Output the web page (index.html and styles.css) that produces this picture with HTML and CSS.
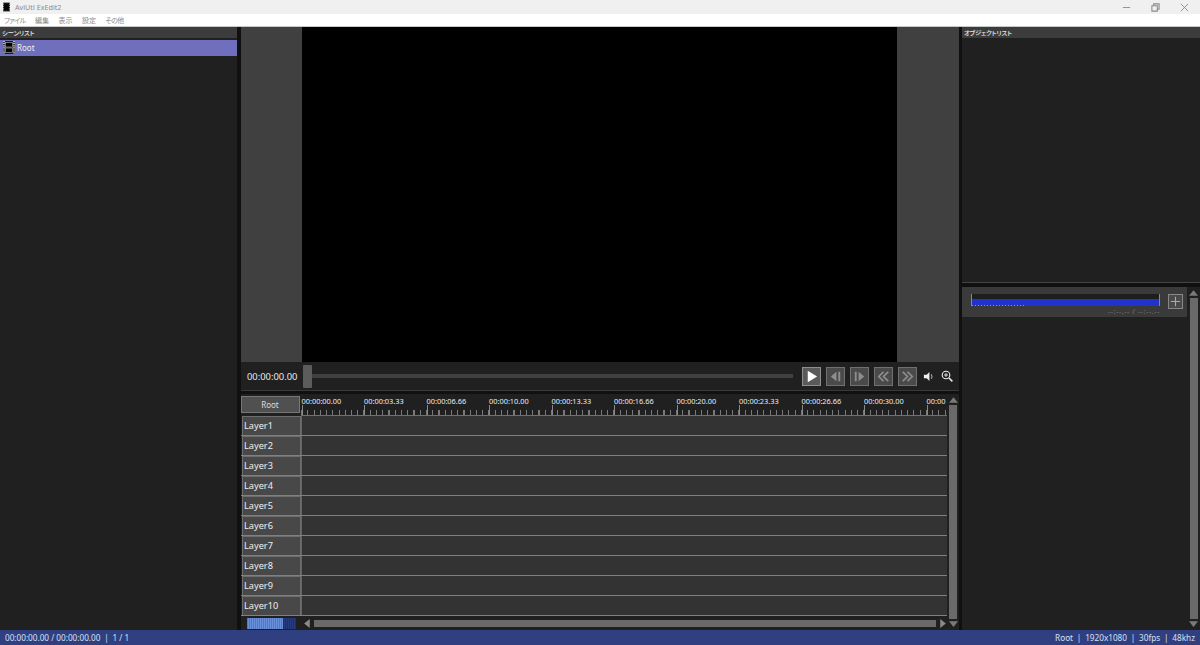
FILE: index.html
```html
<!DOCTYPE html>
<html lang="ja">
<head>
<meta charset="utf-8">
<title>AviUtl ExEdit2</title>
<link rel="stylesheet" href="styles.css">
</head>
<body>
<div class="app">
  <header class="titlebar">
    <div class="title-left">
      <svg class="app-icon" viewBox="0 0 8 10"><rect width="8" height="10" fill="#111"/><rect x="1.6" y="2" width="4.8" height="6" fill="#000"/><path d="M.6 0v10M7.4 0v10" stroke="#ccc" stroke-width="1" stroke-dasharray="1 1"/></svg>
      <span>AviUtl ExEdit2</span>
    </div>
    <div class="win-buttons">
      <svg viewBox="0 0 10 10"><path d="M1 5h8" stroke="#8a8a8a" stroke-width="1"/></svg>
      <svg viewBox="0 0 10 10"><path d="M3 3V1h6v6H7M1 3h6v6H1z" fill="none" stroke="#8a8a8a" stroke-width="1.2"/></svg>
      <svg viewBox="0 0 10 10"><path d="M1 1l8 8M9 1l-8 8" stroke="#8a8a8a" stroke-width="1"/></svg>
    </div>
  </header>
  <nav class="menubar">
    <span class="menu-file">ファイル</span><span>編集</span><span>表示</span><span>設定</span><span class="menu-other">その他</span>
  </nav>
  <main class="workspace">
    <aside class="scene-panel">
      <div class="panel-head">シーンリスト</div>
      <div class="scene-row">
        <svg class="film" viewBox="0 0 12 13"><rect width="12" height="13" fill="#1a1a1a"/><rect x="2.5" y="1.5" width="7" height="4.5" fill="#000" stroke="#bbb" stroke-width=".6"/><rect x="2.5" y="7" width="7" height="4.5" fill="#000" stroke="#bbb" stroke-width=".6"/><path d="M1 0v13M11 0v13" stroke="#ddd" stroke-width="1.6" stroke-dasharray="1.2 .9"/></svg>
        <span>Root</span>
      </div>
    </aside>
    <section class="center">
      <div class="preview"><div class="canvas"></div></div>
      <div class="controls">
        <span class="time">00:00:00.00</span>
        <div class="seek"><div class="seek-knob"></div><div class="seek-track"></div></div>
        <div class="transport">
          <button class="tbtn on"><svg viewBox="0 0 18 18"><path d="M5 3l10 6-10 6z" fill="#fff"/></svg></button>
          <button class="tbtn"><svg viewBox="0 0 18 18"><path d="M10 4v10L4 9zM12 4h2v10h-2z" fill="#8e8e8e"/></svg></button>
          <button class="tbtn"><svg viewBox="0 0 18 18"><path d="M8 4v10l6-5zM4 4h2v10H4z" fill="#8e8e8e"/></svg></button>
          <button class="tbtn"><svg viewBox="0 0 18 18"><path d="M9 4L4 9l5 5M14 4L9 9l5 5" fill="none" stroke="#8e8e8e" stroke-width="1.8"/></svg></button>
          <button class="tbtn"><svg viewBox="0 0 18 18"><path d="M4 4l5 5-5 5M9 4l5 5-5 5" fill="none" stroke="#8e8e8e" stroke-width="1.8"/></svg></button>
        </div>
        <svg class="tool-icon" viewBox="0 0 12 12"><path d="M1 4h3l3-3v10L4 8H1z" fill="#eee"/><path d="M9 3.5q1.5 2.5 0 5" fill="none" stroke="#aaa" stroke-width="1.2"/></svg>
        <svg class="tool-icon zoomi" viewBox="0 0 12 12"><circle cx="5" cy="5" r="3.8" fill="none" stroke="#eee" stroke-width="1.1"/><path d="M8 8l3.4 3.4" stroke="#eee" stroke-width="1.5"/><path d="M3 5h4M5 3v4" stroke="#eee" stroke-width=".9"/></svg>
      </div>
      <div class="timeline">
        <div class="tl-main">
          <div class="tl-head">
            <button class="root-btn">Root</button>
            <div class="ruler">
              <div class="labels"><span>00:00:00.00</span><span>00:00:03.33</span><span>00:00:06.66</span><span>00:00:10.00</span><span>00:00:13.33</span><span>00:00:16.66</span><span>00:00:20.00</span><span>00:00:23.33</span><span>00:00:26.66</span><span>00:00:30.00</span><span>00:00</span></div>
            </div>
          </div>
          <div class="layers">
            <div class="layer"><div class="layer-name">Layer1</div><div class="layer-track"></div></div>
            <div class="layer"><div class="layer-name">Layer2</div><div class="layer-track"></div></div>
            <div class="layer"><div class="layer-name">Layer3</div><div class="layer-track"></div></div>
            <div class="layer"><div class="layer-name">Layer4</div><div class="layer-track"></div></div>
            <div class="layer"><div class="layer-name">Layer5</div><div class="layer-track"></div></div>
            <div class="layer"><div class="layer-name">Layer6</div><div class="layer-track"></div></div>
            <div class="layer"><div class="layer-name">Layer7</div><div class="layer-track"></div></div>
            <div class="layer"><div class="layer-name">Layer8</div><div class="layer-track"></div></div>
            <div class="layer"><div class="layer-name">Layer9</div><div class="layer-track"></div></div>
            <div class="layer"><div class="layer-name">Layer10</div><div class="layer-track"></div></div>
          </div>
          <div class="tl-foot">
            <div class="zoom-meter"><div class="zoom-fill"></div></div>
            <div class="hscroll">
              <svg class="arrow" viewBox="0 0 8 8"><path d="M6 0v8L1 4z" fill="#8a8a8a"/></svg>
              <div class="hthumb"></div>
              <svg class="arrow" viewBox="0 0 8 8"><path d="M2 0v8l5-4z" fill="#8a8a8a"/></svg>
            </div>
          </div>
        </div>
        <div class="vscroll">
          <svg class="arrow" viewBox="0 0 8 8"><path d="M0 6h8L4 1z" fill="#7a7a7a"/></svg>
          <div class="vthumb"></div>
          <svg class="arrow" viewBox="0 0 8 8"><path d="M0 2h8L4 7z" fill="#7a7a7a"/></svg>
        </div>
      </div>
    </section>
    <aside class="right">
      <div class="object-list"><div class="panel-head">オブジェクトリスト</div></div>
      <div class="audio-panel">
        <div class="audio-main">
          <div class="audio-head">
            <div class="audio-col">
              <div class="meter"><div class="meter-blue"></div></div>
              <div class="audio-time">--:--.-- / --:--.--</div>
            </div>
            <button class="plus"><svg viewBox="0 0 14 14"><path d="M7 2v10M2 7h10" stroke="#aaa" stroke-width="1.2"/></svg></button>
          </div>
        </div>
        <div class="vscroll side">
          <svg class="arrow" viewBox="0 0 8 8"><path d="M0 6h8L4 1z" fill="#7a7a7a"/></svg>
          <div class="vthumb"></div>
          <svg class="arrow" viewBox="0 0 8 8"><path d="M0 2h8L4 7z" fill="#7a7a7a"/></svg>
        </div>
      </div>
    </aside>
  </main>
  <footer class="statusbar">
    <div class="status-group"><span>00:00:00.00 / 00:00:00.00</span><span>|</span><span>1 / 1</span></div>
    <div class="status-group"><span>Root</span><span>|</span><span>1920x1080</span><span>|</span><span>30fps</span><span>|</span><span>48khz</span></div>
  </footer>
</div>
</body>
</html>
```

FILE: styles.css
```css
* { box-sizing: border-box; }
html, body { margin: 0; height: 100%; overflow: hidden; }
body { font-family: "Noto Sans CJK JP", "Noto Sans", sans-serif; font-feature-settings: "palt"; background: #101010; }
.app { width: 1200px; height: 645px; display: flex; flex-direction: column; }
.titlebar { height: 14px; background: #f0f0f0; display: flex; justify-content: space-between; align-items: center; color: #8c8c8c; font: 7.2px "Noto Sans", sans-serif; }
.title-left { display: flex; align-items: center; gap: 5px; padding-left: 3px; }
.app-icon { width: 7px; height: 10px; }
.win-buttons { display: flex; gap: 19px; padding-right: 11px; }
.win-buttons svg { width: 9px; height: 9px; margin-left: 1px; }
.menubar { height: 13px; background: #fff; border-bottom: 1px solid #c8c8c8; display: flex; gap: 9.5px; padding-left: 4px; font-size: 7px; line-height: 12px; color: #8c8c8c; }
.menu-file { letter-spacing: -.7px; }
.menu-other { letter-spacing: -.6px; }
.workspace { flex: 1; min-height: 0; display: flex; }
.panel-head { height: 11px; background: #3c3c3c; color: #e8e8e8; font-size: 6.2px; font-weight: 500; line-height: 11px; padding-left: 2px; }
.scene-panel { width: 237px; background: #202020; }
.scene-row { height: 16px; margin-top: 2px; background: #6f6fbd; display: flex; align-items: center; gap: 2px; padding: 0 0 1px 3px; color: #eee; font: 8px "Noto Sans", sans-serif; }
.film { width: 12px; height: 13px; }
.center { width: 718px; margin-left: 4px; display: flex; flex-direction: column; }
.preview { height: 335px; background: #404040; display: flex; padding-left: 61px; }
.canvas { width: 595px; background: #000; }
.controls { height: 29px; background: #202020; display: flex; align-items: center; padding-left: 6px; border-bottom: 1px solid #3a3a3a; }
.time { width: 56px; color: #e8e8e8; font: 9.4px "Noto Sans", sans-serif; white-space: nowrap; }
.seek { width: 490px; display: flex; align-items: center; }
.seek-knob { width: 9px; height: 23px; background: #5c5c5c; border-radius: 1px; flex: none; }
.seek-track { flex: 1; height: 4px; background: #404040; }
.transport { display: flex; gap: 5px; margin-left: 9px; }
.tbtn { width: 19px; height: 19px; padding: 0; background: #4a4a4a; border: 1px solid #707070; display: flex; }
.tbtn.on { background: #5a5a5a; border-color: #8e8e8e; }
.tbtn svg { width: 17px; height: 17px; }
.tool-icon { width: 11px; height: 11px; margin-left: 6px; }
.zoomi { width: 12px; height: 12px; margin-left: 7px; }
.timeline { flex: 1; min-height: 0; margin-top: 3px; display: flex; background: #202020; }
.tl-main { flex: 1; min-width: 0; display: flex; flex-direction: column; }
.tl-head { height: 22px; display: flex; }
.root-btn { width: 59px; height: 17px; margin-top: 2px; padding: 0 1px 0 0; background: #505050; border: 1px solid #777; color: #ddd; font: 8px "Noto Sans", sans-serif; flex: none; }
.ruler { flex: 1; min-width: 0; margin-left: 1px; overflow: hidden; border-bottom: 1px solid #707070; background-image: repeating-linear-gradient(90deg, #7a7a7a 0 1px, transparent 1px 6.25px); background-size: 100% 5px; background-repeat: no-repeat; background-position: 0 bottom; }
.labels { display: flex; color: #e8ecf4; font: 7.4px "Noto Sans", sans-serif; line-height: 11px; padding: 2px 0 0 .5px; }
.labels span { position: relative; flex: none; width: 62.5px; white-space: nowrap; }
.labels span::after { content: ""; position: absolute; left: 0; top: 9px; width: 1px; height: 10px; background: #8a8a8a; }
.layers { display: flex; flex-direction: column; }
.layer { height: 20px; display: flex; border-bottom: 1px solid #808080; }
.layer-name { width: 59px; margin-left: 1px; background: #484848; border: 1px solid #6e6e6e; border-bottom: 0; color: #eee; font: 9.2px/17px "Noto Sans", sans-serif; padding-left: 1px; flex: none; }
.layer-track { flex: 1; background: #333; border-left: 1px solid #7a5a5a; }
.tl-foot { flex: 1; display: flex; align-items: center; }
.zoom-meter { width: 49px; height: 11px; margin-left: 6px; background: repeating-linear-gradient(90deg, #1f3068 0 1px, #2a3c80 1px 2px); flex: none; }
.zoom-fill { width: 36px; height: 100%; background: repeating-linear-gradient(90deg, #4f78c8 0 1px, #6a90dc 1px 2px), #5078c8; }
.hscroll { flex: 1; display: flex; align-items: center; gap: 2px; margin-left: 7px; }
.hthumb { flex: 1; height: 7px; background: #6a6a6a; }
.arrow { width: 9px; height: 9px; flex: none; }
.vscroll { width: 12px; display: flex; flex-direction: column; align-items: center; padding: 2px 0; gap: 0; flex: none; }
.vthumb { flex: 1; width: 8px; background: #6a6a6a; }
.right { flex: 1; min-width: 0; margin-left: 3px; display: flex; flex-direction: column; gap: 4px; }
.object-list { height: 256px; background: #202020; border-bottom: 1px solid #444; }
.audio-panel { flex: 1; min-height: 0; background: #202020; display: flex; }
.audio-main { flex: 1; min-width: 0; }
.audio-head { height: 30px; background: #3a3a3a; display: flex; padding: 7px 4px 0 9px; gap: 8px; }
.audio-col { flex: 1; min-width: 0; }
.meter { height: 12px; background: #1e1e1e; border-left: 1px solid #888; border-right: 1px solid #888; display: flex; align-items: flex-end; }
.meter-blue { flex: 1; height: 7px; background: repeating-linear-gradient(90deg, #8890e0 0 1px, transparent 1px 3px) 0 bottom / 53px 1px no-repeat, #2233cc; }
.audio-time { color: #777; font: 7px/11px "Noto Sans", sans-serif; letter-spacing: .6px; text-align: right; }
.plus { width: 15px; height: 15px; padding: 0; background: #4a4a4a; border: 1px solid #888; display: flex; }
.plus svg { width: 13px; height: 13px; }
.side { width: 13px; }
.statusbar { height: 15px; background: #2f3f80; color: #d8e0f0; font: 8.2px/15px "Noto Sans", sans-serif; display: flex; justify-content: space-between; padding: 0 5px; flex: none; }
.status-group { display: flex; gap: 3.8px; }
```
